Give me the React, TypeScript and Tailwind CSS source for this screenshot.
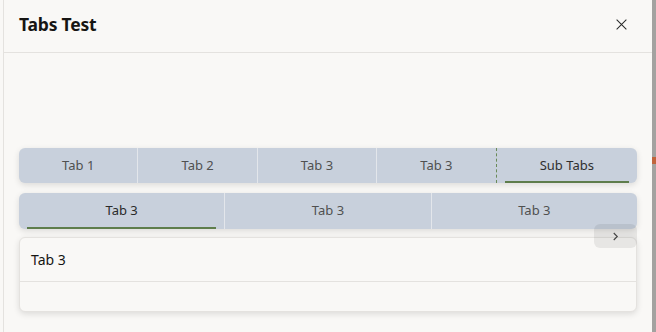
import React from 'react';

// Dialog with two tab bars and a content card

const topTabs = ['Tab 1', 'Tab 2', 'Tab 3', 'Tab 3', 'Sub Tabs'];
const subTabs = ['Tab 3', 'Tab 3', 'Tab 3'];

const App: React.FC = () => {
  return (
    <div
      className="flex h-[332px] w-full bg-[#f9f8f6] text-[#161513]"
      style={{ fontFamily: '"Noto Sans", "Open Sans", sans-serif' }}
    >
      <div className="w-[3px]" />
      <div className="flex flex-1 flex-col border-l border-[#e4e2df]">
        {/* Header */}
        <div className="flex h-[53px] items-center justify-between border-b border-[#e4e2df] pb-[4px] pl-[15px] pr-[19px]">
          <h1 className="text-[17.5px] font-bold tracking-[-0.2px]">Tabs Test</h1>
          <button className="flex h-6 w-6 items-center justify-center text-[#2a2a2a]">
            <svg viewBox="0 0 16 16" className="h-[13px] w-[13px]" fill="none" stroke="currentColor" strokeWidth="1.3">
              <path d="M2 2L14 14M14 2L2 14" />
            </svg>
          </button>
        </div>

        {/* Body */}
        <div className="flex flex-col pl-[15px] pr-[15px] pt-[95px]">
          {/* Top tab bar */}
          <div className="flex h-[35px] rounded-md bg-[#c8d0dc] shadow-[0_2px_6px_rgba(0,0,0,0.12)]">
            {topTabs.map((t, i) => (
              <div
                key={i}
                className={`relative flex flex-auto items-center justify-center px-3 text-[13px] ${
                  i === 4 ? 'border-l border-dashed border-[#6a8a58] text-[#2f2f2f]' : 'text-[#505050]'
                } ${i > 0 && i < 4 ? 'border-l border-[#e3e6eb]' : ''}`}
              >
                {t}
                {i === 4 && <div className="absolute bottom-0 left-2 right-2 h-[2px] bg-[#5e7d4c]" />}
              </div>
            ))}
          </div>

          {/* Sub tab bar */}
          <div className="relative mt-[10px]">
            <div className="flex h-[36px] rounded-md bg-[#c8d0dc] shadow-[0_2px_6px_rgba(0,0,0,0.12)]">
              {subTabs.map((t, i) => (
                <div
                  key={i}
                  className={`relative flex flex-1 items-center justify-center text-[13px] ${
                    i === 0 ? 'text-[#2a2a2a]' : 'border-l border-[#e3e6eb] text-[#505050]'
                  }`}
                >
                  {t}
                  {i === 0 && <div className="absolute bottom-0 left-2 right-2 h-[2px] bg-[#5e7d4c]" />}
                </div>
              ))}
            </div>
            <button className="absolute right-0 top-[31px] z-10 flex h-[24px] w-[43px] items-center justify-center rounded-md bg-[rgba(0,0,0,0.07)] text-[#444]">
              <svg viewBox="0 0 8 10" className="h-[9px] w-[7px]" fill="none" stroke="currentColor" strokeWidth="1.3">
                <path d="M2 1L6 5L2 9" />
              </svg>
            </button>
          </div>

          {/* Content card */}
          <div className="mt-[8px] flex flex-col rounded-md border border-[#e4e2df] bg-[#f9f8f6] shadow-[0_2px_6px_rgba(0,0,0,0.12)]">
            <div className="flex h-[44px] items-center border-b border-[#e4e2df] px-[11px] text-[14px] text-[#161513]">
              Tab 3
            </div>
            <div className="h-[29px]" />
          </div>
        </div>
      </div>
      <div className="flex w-[4px] flex-col bg-[#a3a2a0] pt-[157px]">
        <div className="h-[7px] bg-[#c0643c]" />
      </div>
    </div>
  );
};

export default App;
